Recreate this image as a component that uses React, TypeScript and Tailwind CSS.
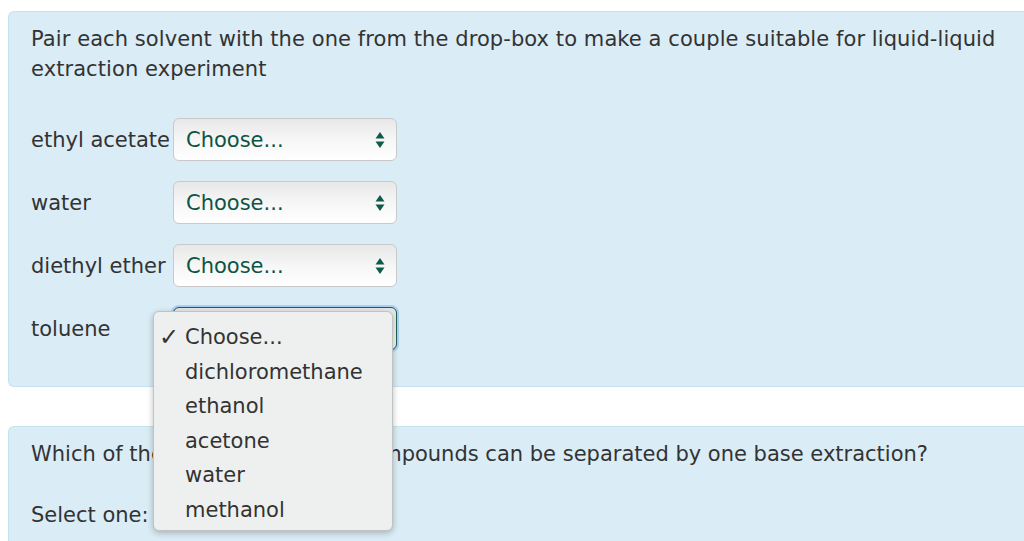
import React from 'react';

const font = { fontFamily: '"DejaVu Sans", Verdana, sans-serif' };

const options = ['Choose...', 'dichloromethane', 'ethanol', 'acetone', 'water', 'methanol'];

const Arrows: React.FC = () => (
  <svg width="10" height="18" viewBox="0 0 10 18" className="shrink-0">
    <polygon points="5,1 9.5,7.5 0.5,7.5" fill="#0f5a48" />
    <polygon points="5,17 9.5,10.5 0.5,10.5" fill="#0f5a48" />
  </svg>
);

const FakeSelect: React.FC<{ focused?: boolean }> = ({ focused }) => {
  if (focused) {
    return (
      <div className="rounded-[8px] p-[2px] bg-[#a9d0f3] -m-[2px]">
        <div className="h-[43px] w-[224px] rounded-[6px] border border-[#1e5f4c] bg-gradient-to-b from-[#e6e6e6] to-[#f8f8f8]" />
      </div>
    );
  }
  return (
    <div className="h-[43px] w-[224px] rounded-[6px] border border-[#c9c9c9] bg-gradient-to-b from-[#e8e8e8] via-[#f6f6f6] to-white shadow-[inset_0_-1px_1px_rgba(255,255,255,0.9)] flex items-center justify-between pl-[12px] pr-[11px]">
      <span className="text-[#0d5443]">Choose...</span>
      <Arrows />
    </div>
  );
};

const Row: React.FC<{ label: string; focused?: boolean }> = ({ label, focused }) => (
  <div className="flex items-center">
    <span className="w-[142px] shrink-0 whitespace-nowrap">{label}</span>
    <FakeSelect focused={focused} />
  </div>
);

const App: React.FC = () => {
  return (
    <div className="w-[1024px] h-[541px] overflow-hidden bg-white pl-[8px] pt-[11px] text-[21px] leading-[30px] text-[#333333] relative" style={font}>
      <div className="rounded-l-[6px] border border-r-0 border-[#c4e3ed] bg-[#daecf6] pl-[22px] pt-[12px] pb-[36px]">
        <p className="whitespace-nowrap tracking-[0.08px]">
          Pair each solvent with the one from the drop-box to make a couple suitable for liquid-liquid
          <br />
          extraction experiment
        </p>
        <div className="mt-[34px] flex flex-col gap-[20px]">
          <Row label="ethyl acetate" />
          <Row label="water" />
          <Row label="diethyl ether" />
          <Row label="toluene" focused />
        </div>
      </div>

      <div className="mt-[39px] rounded-l-[6px] border border-r-0 border-[#c4e3ed] bg-[#daecf6] pl-[22px] pt-[12px] h-[200px]">
        <p className="whitespace-nowrap">Which of the following pairs of compounds can be separated by one base extraction?</p>
        <p className="mt-[31px]">Select one:</p>
      </div>

      {/* open dropdown menu for toluene */}
      <div className="absolute left-[153px] top-[311px] w-[240px] rounded-[6px] border border-[#bfc3c4] bg-[#eef0f0] shadow-[0_2px_6px_rgba(0,0,0,0.25)] pt-[8px] pb-[3px]">
        {options.map((o, i) => (
          <div key={o} className="relative h-[34.5px] flex items-center pl-[31px]">
            {i === 0 && <span className="absolute left-[5px] text-[24px] leading-none font-bold">✓</span>}
            {o}
          </div>
        ))}
      </div>
    </div>
  );
};

export default App;
